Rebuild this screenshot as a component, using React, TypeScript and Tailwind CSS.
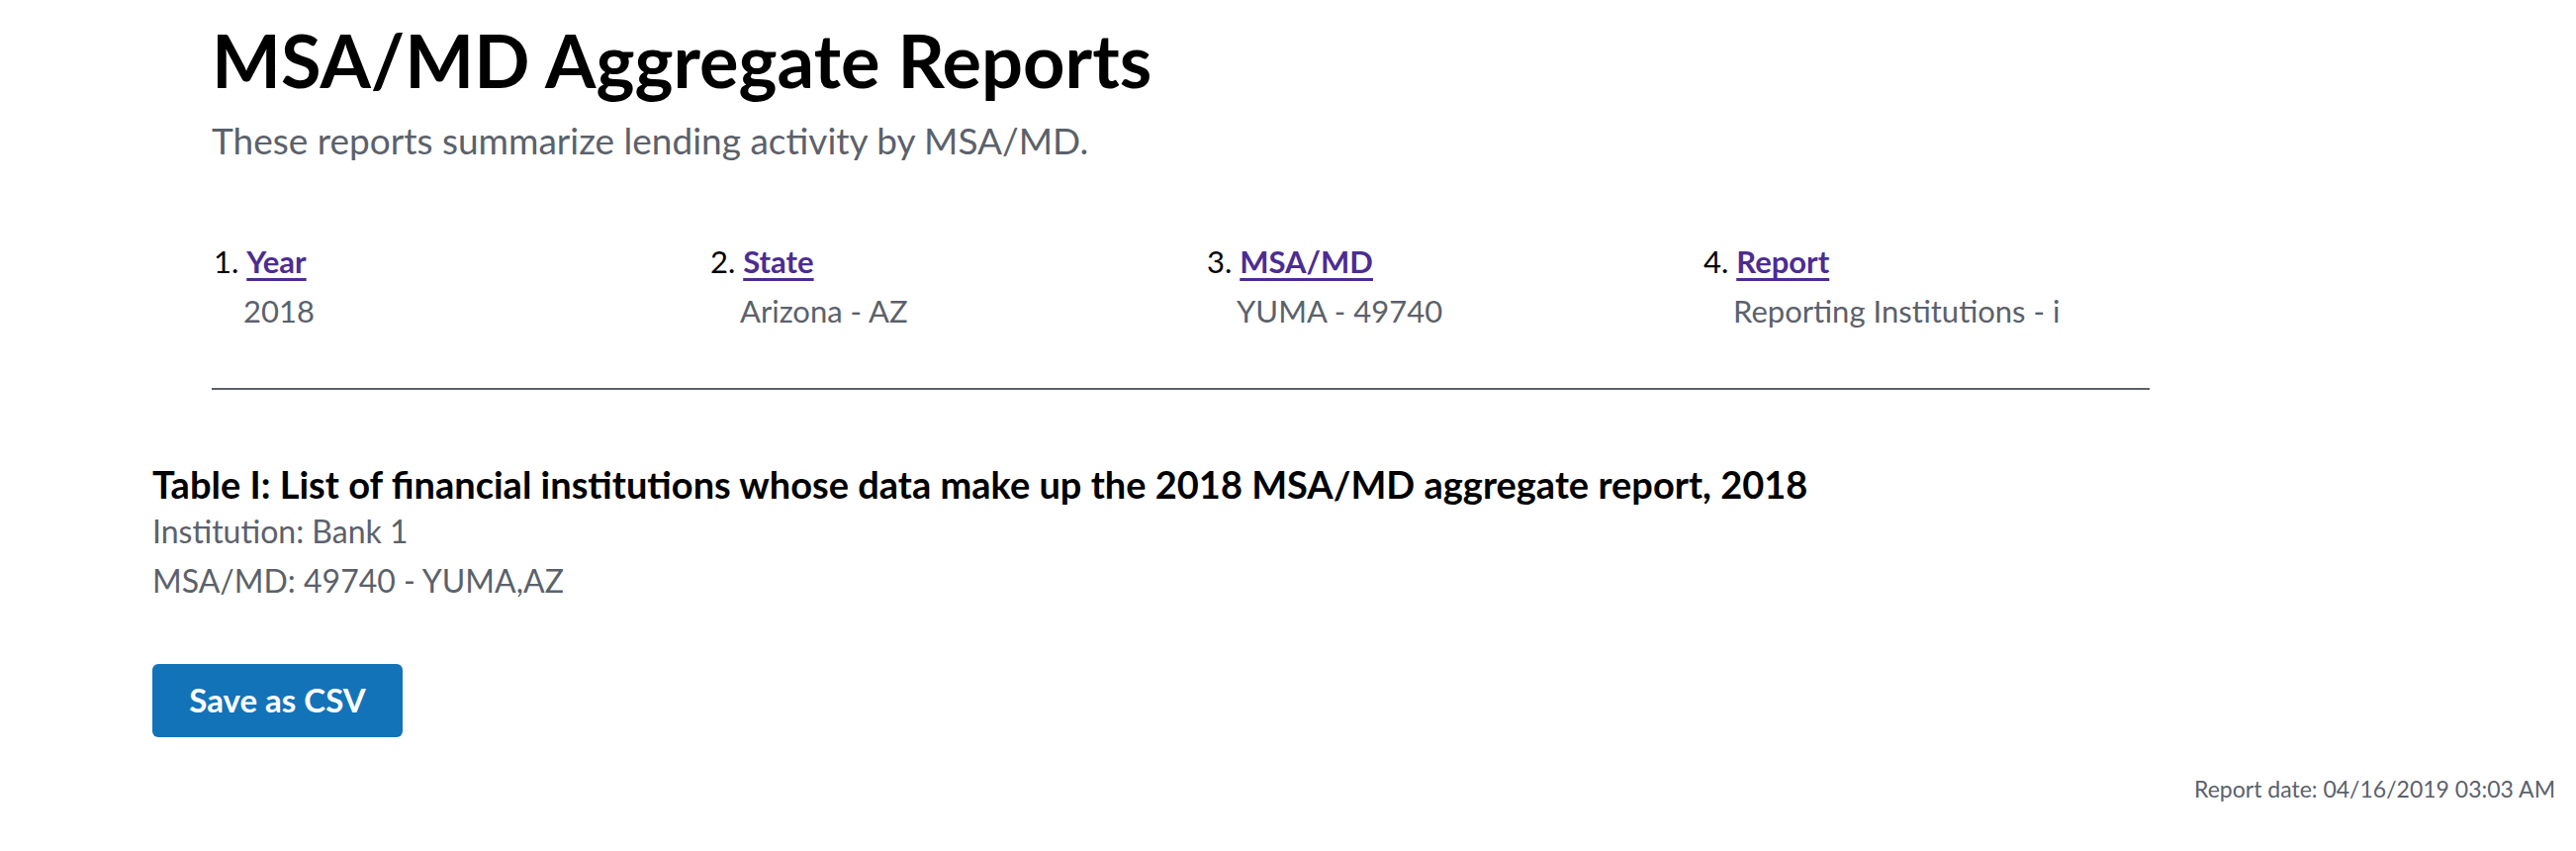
export default function App() {
  const steps = [
    { n: "1.", label: "Year", value: "2018" },
    { n: "2.", label: "State", value: "Arizona - AZ" },
    { n: "3.", label: "MSA/MD", value: "YUMA - 49740" },
    { n: "4.", label: "Report", value: "Reporting Institutions - i" },
  ];
  return (
    <div className="min-h-screen bg-white font-['Lato',sans-serif] text-black">
      <div className="pl-[214px] pt-[22px]">
        <h1 className="text-[74px] leading-[78px] font-bold">MSA/MD Aggregate Reports</h1>
        <p className="mt-[18px] text-[37px] leading-[48px] text-[#5b616b]">
          These reports summarize lending activity by MSA/MD.
        </p>
        <div className="mt-[73px] flex">
          {steps.map((s) => (
            <div key={s.n} className="w-[502px] text-[31px] leading-[50px]">
              <div className="pl-[2px]">
                {s.n}{" "}
                <a href="#" className="font-bold text-[#4c2c92] underline decoration-[3px] underline-offset-[5px]">
                  {s.label}
                </a>
              </div>
              <div className="pl-[32px] text-[#5b616b]">{s.value}</div>
            </div>
          ))}
        </div>
        <div className="mt-[53px] h-[2px] w-[1959px] bg-[#5b616b]" />
      </div>
      <div className="pl-[154px] mt-[72px]">
        <h3 className="text-[38px] leading-[46px] font-bold">
          Table I: List of financial institutions whose data make up the 2018 MSA/MD aggregate report, 2018
        </h3>
        <p className="text-[32px] leading-[50px] text-[#5b616b]">Institution: Bank 1</p>
        <p className="text-[32px] leading-[50px] text-[#5b616b]">MSA/MD: 49740 - YUMA,AZ</p>
        <button className="mt-[59px] h-[74px] w-[253px] rounded-[6px] bg-[#1373b9] text-[33px] font-bold text-white">
          Save as CSV
        </button>
      </div>
      <div className="mt-[37px] pr-[21px] text-right text-[23px] leading-[30px] text-[#5b616b]">
        Report date: 04/16/2019 03:03 AM
      </div>
    </div>
  );
}
